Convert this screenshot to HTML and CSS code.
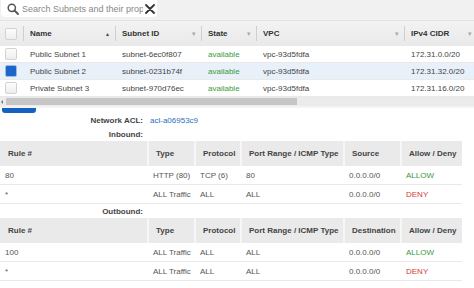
FILE: index.html
```html
<!DOCTYPE html>
<html>
<head>
<meta charset="utf-8">
<link rel="stylesheet" href="styles.css">
</head>
<body>
<div class="top">
  <div class="searchbar">
    <div class="search">
      <svg class="mag" width="12" height="12" viewBox="0 0 12 12"><circle cx="4.8" cy="4.8" r="3.6" fill="none" stroke="#555" stroke-width="1.5"/><path d="M7.5 7.5 L11 11" stroke="#555" stroke-width="1.8" stroke-linecap="round"/></svg>
      <span class="ph">Search Subnets and their prop</span>
      <svg class="clr" width="10" height="10" viewBox="0 0 10 10"><path d="M1 1 L9 9 M9 1 L1 9" stroke="#333" stroke-width="1.8" stroke-linecap="round"/></svg>
    </div>
  </div>
  <div class="grid">
    <div class="hrow">
      <div class="hc cb"><span class="box"></span></div>
      <div class="hc"><span>Name</span><span class="sort up">▲</span></div>
      <div class="hc"><span>Subnet ID</span><span class="sort">▾</span></div>
      <div class="hc"><span>State</span><span class="sort">▾</span></div>
      <div class="hc"><span>VPC</span><span class="sort">▾</span></div>
      <div class="hc last"><span>IPv4 CIDR</span><span class="sort">▾</span></div>
    </div>
    <div class="row">
      <div class="c cb"><span class="box"></span></div>
      <div class="c">Public Subnet 1</div>
      <div class="c">subnet-6ec0f807</div>
      <div class="c ok">available</div>
      <div class="c">vpc-93d5fdfa</div>
      <div class="c">172.31.0.0/20</div>
    </div>
    <div class="row sel">
      <div class="c cb"><span class="box on"></span></div>
      <div class="c">Public Subnet 2</div>
      <div class="c">subnet-0231b74f</div>
      <div class="c ok">available</div>
      <div class="c">vpc-93d5fdfa</div>
      <div class="c">172.31.32.0/20</div>
    </div>
    <div class="row">
      <div class="c cb"><span class="box"></span></div>
      <div class="c">Private Subnet 3</div>
      <div class="c">subnet-970d76ec</div>
      <div class="c ok">available</div>
      <div class="c">vpc-93d5fdfa</div>
      <div class="c">172.31.16.0/20</div>
    </div>
  </div>
  <div class="hscroll"><span class="larr"></span><div class="thumb"></div></div>
</div>
<div class="tabs"><div class="tab"></div></div>
<div class="details">
  <div class="kv"><span class="k">Network ACL:</span><span class="link">acl-a06953c9</span></div>
  <div class="kv"><span class="k">Inbound:</span></div>
  <table class="rules">
    <colgroup><col class="w1"><col class="w2"><col class="w3"><col class="w4"><col class="w5"><col class="w6"></colgroup>
    <thead><tr><th>Rule #</th><th>Type</th><th>Protocol</th><th>Port Range / ICMP Type</th><th>Source</th><th>Allow / Deny</th></tr></thead>
    <tbody>
      <tr><td>80</td><td>HTTP (80)</td><td>TCP (6)</td><td>80</td><td>0.0.0.0/0</td><td class="allow">ALLOW</td></tr>
      <tr><td>*</td><td>ALL Traffic</td><td>ALL</td><td>ALL</td><td>0.0.0.0/0</td><td class="deny">DENY</td></tr>
    </tbody>
  </table>
  <div class="kv"><span class="k">Outbound:</span></div>
  <table class="rules">
    <colgroup><col class="w1"><col class="w2"><col class="w3"><col class="w4"><col class="w5"><col class="w6"></colgroup>
    <thead><tr><th>Rule #</th><th>Type</th><th>Protocol</th><th>Port Range / ICMP Type</th><th>Destination</th><th>Allow / Deny</th></tr></thead>
    <tbody>
      <tr><td>100</td><td>ALL Traffic</td><td>ALL</td><td>ALL</td><td>0.0.0.0/0</td><td class="allow">ALLOW</td></tr>
      <tr><td>*</td><td>ALL Traffic</td><td>ALL</td><td>ALL</td><td>0.0.0.0/0</td><td class="deny">DENY</td></tr>
    </tbody>
  </table>
</div>
</body>
</html>
```
FILE: styles.css
```css
html, body {
  margin: 0;
  padding: 0;
  background: #fff;
  overflow: hidden;
  width: 474px;
  height: 288px;
  font-family: "Liberation Sans", Arial, sans-serif;
  font-size: 8px;
  color: #444;
}
.top {
  width: 474px;
  overflow: hidden;
}
.searchbar {
  height: 20px;
  background: #f1f1f1;
}
.search {
  width: 156px;
  height: 17px;
  margin-left: 1px;
  background: #fff;
  border-radius: 0 0 4px 4px;
  display: flex;
  align-items: center;
  box-sizing: border-box;
  padding-left: 6px;
}
.mag { flex: none; }
.ph {
  font-size: 9px;
  color: #888;
  margin-left: 3px;
  width: 121px;
  overflow: hidden;
  white-space: nowrap;
}
.clr { flex: none; margin-left: 2px; }
.grid {
  width: 474px;
}
.hrow, .row {
  display: grid;
  grid-template-columns: 23px 92px 86px 55px 148px 70px;
}
.hrow {
  height: 26px;
  background: linear-gradient(#f3f3f3, #e9e9e9);
  border-top: 1px solid #e2e2e2;
  box-sizing: border-box;
}
.hc {
  display: flex;
  align-items: center;
  justify-content: space-between;
  padding: 0 5px 0 7px;
  font-weight: bold;
  color: #333;
  position: relative;
}
.hc.last { padding-right: 2px; }
.hc + .hc::before {
  content: "";
  position: absolute;
  left: 0;
  top: 5px;
  bottom: 5px;
  width: 1px;
  background: #cfcfcf;
}
.hc.cb, .c.cb {
  padding: 0;
  justify-content: center;
  padding-right: 1px;
}
.sort {
  color: #aaa;
  font-size: 7px;
  font-weight: normal;
}
.sort.up {
  color: #444;
  font-size: 5px;
}
.box {
  display: block;
  width: 10px;
  height: 10px;
  border: 1px solid #d2d2d2;
  border-radius: 2px;
  background: linear-gradient(#fdfdfd, #eeeeee);
}
.box.on {
  background: #1a66c9;
  border-color: #9bbbe6;
}
.row {
  height: 17px;
  border-bottom: 1px solid #e9e9e9;
  box-sizing: border-box;
  background: #fff;
}
.row.sel { background: #e8f0fa; }
.c {
  display: flex;
  align-items: center;
  padding-left: 7px;
  white-space: nowrap;
  color: #444;
}
.c.ok { color: #3a9a3a; }
.hscroll {
  height: 9px;
  background: #ebebeb;
  position: relative;
  border-bottom: 2px solid #f4f4f4;
  box-sizing: content-box;
}
.larr {
  position: absolute;
  left: 1px;
  top: 3px;
  width: 0;
  height: 0;
  border-top: 2px solid transparent;
  border-bottom: 2px solid transparent;
  border-right: 2px solid #777;
}
.thumb {
  position: absolute;
  left: 6px;
  top: 1px;
  width: 291px;
  height: 7px;
  background: #c6c6c6;
}
.tabs {
  height: 5px;
  padding: 0 0 0 2px;
}
.tab {
  width: 34px;
  height: 5px;
  background: #1862bf;
  border-radius: 0 0 3px 3px;
}
.details {
  padding-top: 0;
}
.kv {
  display: grid;
  grid-template-columns: 143px auto;
  column-gap: 7px;
  height: 14px;
  align-items: center;
}
.k {
  text-align: right;
  font-weight: bold;
  color: #444;
}
.link { color: #2a6fc1; }
.rules {
  border-collapse: collapse;
  table-layout: fixed;
  width: 462px;
}
.w1 { width: 148px; }
.w2 { width: 47px; }
.w3 { width: 46px; }
.w4 { width: 103px; }
.w5 { width: 57px; }
.w6 { width: 61px; }
.rules th {
  height: 25px;
  background: #eaeaea;
  text-align: left;
  font-weight: bold;
  color: #444;
  padding: 0 0 0 7px;
  white-space: nowrap;
}
.rules th + th {
  border-left: 2px solid #f6f6f6;
}
.rules th:first-child { padding-left: 8px; }
.rules td {
  height: 18px;
  padding: 0 0 0 5px;
  border-bottom: 1px solid #e9e9e9;
  white-space: nowrap;
  color: #555;
}
.rules td.allow { color: #3a9a3a; }
.rules td.deny { color: #d43a3a; }
```
